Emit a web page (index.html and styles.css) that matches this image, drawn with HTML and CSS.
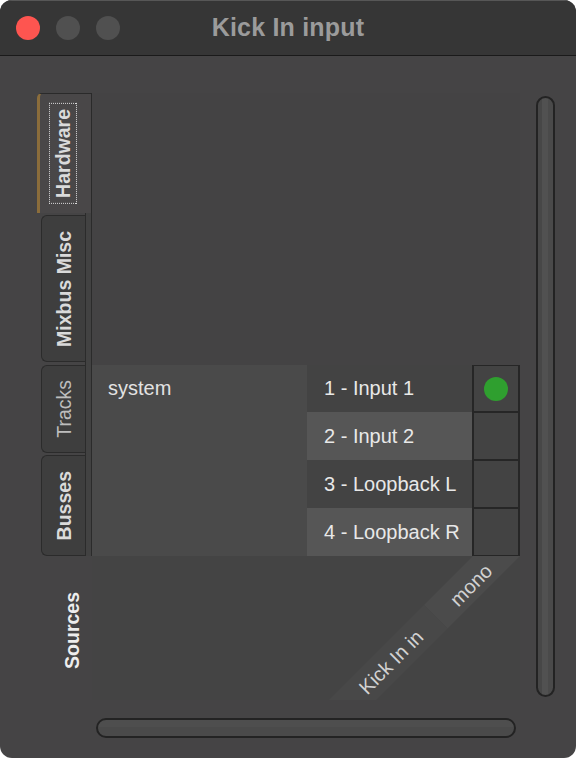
FILE: index.html
```html
<!DOCTYPE html>
<html>
<head>
<meta charset="utf-8">
<title>Kick In input</title>
<link rel="stylesheet" href="styles.css">
</head>
<body>
<div class="window">
  <div class="titlebar">
    <div class="lights">
      <span class="light red"></span>
      <span class="light gray"></span>
      <span class="light gray"></span>
    </div>
    <div class="title">Kick In input</div>
    <div class="title-right"></div>
  </div>
  <div class="body">
    <div class="main">
      <div class="tabcol">
        <div class="tab-active"><span class="vlabel bold focus">Hardware</span></div>
        <div class="inactive">
          <div class="tablist">
            <div class="tab t-mixbus"><span class="vlabel bold">Mixbus Misc</span></div>
            <div class="tab t-tracks"><span class="vlabel thin">Tracks</span></div>
            <div class="tab t-busses"><span class="vlabel bold">Busses</span></div>
          </div>
          <div class="edge"></div>
        </div>
        <div class="sources"><span class="vlabel bold bright">Sources</span></div>
      </div>
      <div class="content">
        <div class="spacer"></div>
        <div class="matrix">
          <div class="bundle">system</div>
          <div class="port dark">1 - Input 1</div>
          <div class="cell"><span class="dot"></span></div>
          <div class="port lite">2 - Input 2</div>
          <div class="cell"></div>
          <div class="port dark">3 - Loopback L</div>
          <div class="cell"></div>
          <div class="port lite">4 - Loopback R</div>
          <div class="cell"></div>
        </div>
        <svg class="colheads" width="428" height="144" viewBox="0 0 428 144">
          <polygon class="band-mono" points="381,0 428,0 355.5,72.5 332,49"></polygon>
          <polygon class="band-kick" points="332,49 355.5,72.5 284,144 237,144"></polygon>
          <text x="379" y="29" transform="rotate(-45 379 29)" text-anchor="middle" dominant-baseline="central">mono</text>
          <text x="299" y="106" transform="rotate(-45 299 106)" text-anchor="middle" dominant-baseline="central">Kick In in</text>
        </svg>
      </div>
    </div>
    <div class="vscroll"></div>
    <div class="hscroll"></div>
  </div>
</div>
</body>
</html>
```
FILE: styles.css
```css
* { box-sizing: border-box; }

html, body {
  margin: 0;
  padding: 0;
  background: #ffffff;
}

body {
  font-family: "Liberation Sans", Arial, sans-serif;
}

.window {
  width: 576px;
  height: 758px;
  border-radius: 12px;
  overflow: hidden;
  background: #454445;
  display: flex;
  flex-direction: column;
}

/* ---------- title bar ---------- */
.titlebar {
  height: 56px;
  flex: none;
  background: #363636;
  border-bottom: 1px solid #1a1a1a;
  box-shadow: inset 0 1px 0 #575757;
  display: grid;
  grid-template-columns: 1fr auto 1fr;
  align-items: start;
}

.lights {
  display: flex;
  gap: 16px;
  padding: 16px 0 0 16px;
}

.light {
  width: 24px;
  height: 24px;
  border-radius: 50%;
  display: block;
}

.light.red { background: #fe5550; }
.light.gray { background: #505050; }

.title {
  font-weight: bold;
  font-size: 25px;
  line-height: 54px;
  color: #9b9b9b;
  letter-spacing: 0.2px;
}

/* ---------- body ---------- */
.body {
  flex: 1;
  padding: 37px 21px 20px 37px;
  display: grid;
  grid-template-columns: 483px 19px;
  grid-template-rows: 607px 20px;
  column-gap: 16px;
  row-gap: 18px;
}

.main {
  grid-column: 1;
  grid-row: 1;
  display: flex;
}

/* ---------- vertical tabs ---------- */
.tabcol {
  width: 55px;
  flex: none;
  display: flex;
  flex-direction: column;
}

.vlabel {
  writing-mode: vertical-rl;
  transform: rotate(180deg);
  font-size: 19.5px;
  line-height: 20px;
  white-space: nowrap;
}

.vlabel.bold { font-weight: bold; color: #dadada; }
.vlabel.thin { font-weight: normal; color: #bdbdbd; }
.vlabel.bright { color: #ededed; }

.tab-active {
  height: 120px;
  width: 55px;
  background: #494748;
  border-left: 3px solid #8b6d3b;
  border-top: 1px solid #2a2a2a;
  border-right: 1px solid #2a2a2a;
  border-top-left-radius: 5px;
  display: flex;
  align-items: center;
  justify-content: center;
  padding-right: 6px;
}

.focus {
  color: #f2f2f2;
  border: 1px dotted #d8d8d8;
  padding: 5px 3px;
}

.inactive {
  height: 343px;
  display: flex;
}

.tablist {
  width: 48px;
  display: flex;
  flex-direction: column;
}

.tab {
  margin-left: 4px;
  width: 44px;
  background: #3e3e3e;
  border: 1px solid #2b2b2b;
  border-right: none;
  border-radius: 6px 0 0 6px;
  display: flex;
  align-items: center;
  justify-content: center;
}

.t-mixbus { margin-top: 2px; height: 147px; }
.t-tracks { margin-top: 3px; height: 88px; }
.t-busses { margin-top: 2px; height: 101px; }

.edge {
  width: 7px;
  background: #424242;
  border-left: 1px solid #2b2b2b;
  border-right: 1px solid #2b2b2b;
}

.sources {
  padding-top: 36px;
  padding-left: 15px;
  display: flex;
  justify-content: center;
}

/* ---------- port matrix ---------- */
.content {
  width: 428px;
  display: flex;
  flex-direction: column;
}

.spacer {
  height: 272px;
  background: #444344;
}

.matrix {
  height: 191px;
  display: grid;
  grid-template-columns: 215px 165px 48px;
  grid-template-rows: 47px 48px 48px 48px;
  font-size: 20px;
}

.bundle {
  grid-column: 1;
  grid-row: 1 / span 4;
  background: #4a4a4a;
  color: #e2e2e2;
  padding-left: 16px;
  line-height: 47px;
}

.port {
  grid-column: 2;
  padding-left: 17px;
  color: #e8e8e8;
  display: flex;
  align-items: center;
}

.port.dark { background: #434343; }
.port.lite { background: #565656; }

.cell {
  grid-column: 3;
  background: #434343;
  border: 1px solid #262626;
  border-left-width: 2px;
  border-right-width: 2px;
  display: flex;
  align-items: center;
  justify-content: center;
}

.dot {
  width: 24px;
  height: 24px;
  border-radius: 50%;
  background: #2f9f2f;
  display: block;
}

.colheads {
  display: block;
  background: #444444;
}

.band-mono { fill: #4b4b4b; }
.band-kick { fill: #484848; }

.colheads text {
  font-family: "Liberation Sans", Arial, sans-serif;
  font-size: 20px;
  fill: #d2d2d2;
}

/* ---------- scrollbars ---------- */
.vscroll {
  grid-column: 2;
  grid-row: 1;
  margin-top: 3px;
  height: 601px;
  border: 2px solid #232323;
  border-radius: 10px;
  background: linear-gradient(to right, #474747 0 30%, #515151 30% 65%, #4a4a4a 65%);
}

.hscroll {
  grid-column: 1;
  grid-row: 2;
  margin-left: 59px;
  width: 420px;
  height: 20px;
  border: 2px solid #232323;
  border-radius: 10px;
  background: linear-gradient(to bottom, #4e4e4e 0 45%, #4a4a4a 45%);
}
```
